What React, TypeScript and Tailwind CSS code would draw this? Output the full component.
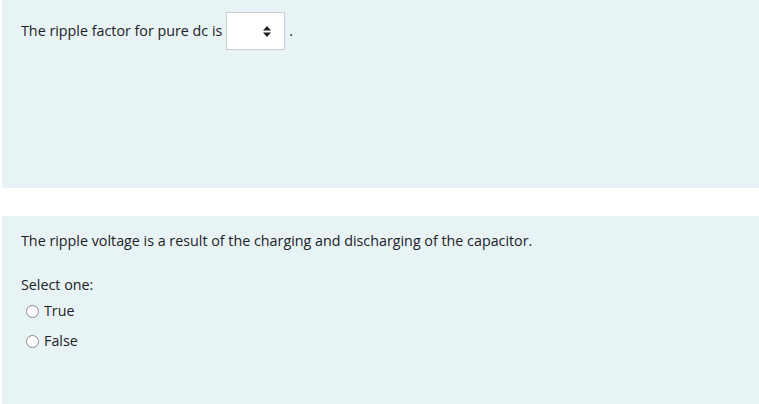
import React from "react";

function Radio({ label }: { label: string }) {
  return (
    <label className="flex items-center gap-[5px] h-[26px]">
      <span className="w-[13px] h-[13px] rounded-full border border-[#8a8a8a] bg-white" />
      <span>{label}</span>
    </label>
  );
}

export default function App() {
  return (
    <div
      className="w-[759px] h-[404px] bg-white text-[#1d2125] text-[14.3px] overflow-hidden pl-[2px]"
      style={{ fontFamily: '"Open Sans", sans-serif' }}
    >
      {/* Question 1 */}
      <div className="h-[188px] bg-[#e7f3f5] pl-[19px] pt-[12px]">
        <div className="flex items-center">
          <span>The ripple factor for pure dc is</span>
          <div className="ml-[4px] w-[59px] h-[38px] bg-white border border-[#c8cdd2] shadow-[0_0_0_1px_#eef2f4] flex items-center justify-end pr-[13px]">
            <svg width="8" height="11" viewBox="0 0 8 11">
              <path d="M4 0 L8 4.5 H0 Z M4 11 L0 6.5 H8 Z" fill="#1d2125" />
            </svg>
          </div>
          <span className="ml-[4px]">.</span>
        </div>
      </div>

      {/* Question 2 */}
      <div className="mt-[28px] h-[188px] bg-[#e7f3f5] pl-[19px] pt-[15px]">
        <p className="leading-[20px]">
          The ripple voltage is a result of the charging and discharging of the capacitor.
        </p>
        <p className="mt-[24px] leading-[20px]">Select one:</p>
        <div className="mt-[3px] pl-[5px] flex flex-col gap-[4px]">
          <Radio label="True" />
          <Radio label="False" />
        </div>
      </div>
    </div>
  );
}
